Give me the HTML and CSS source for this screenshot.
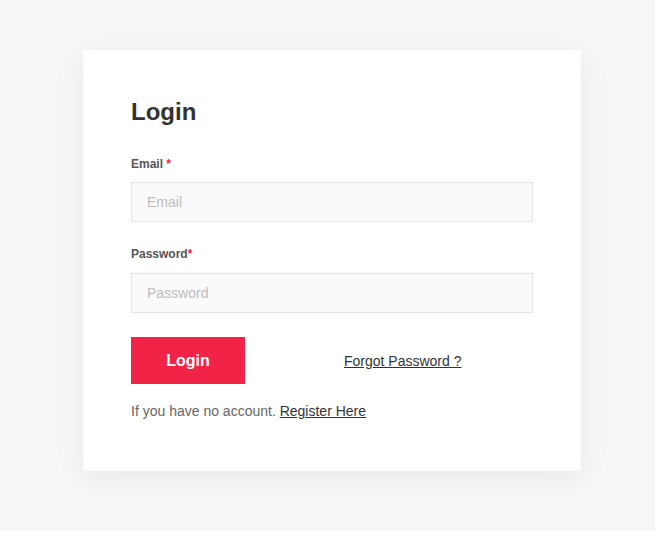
FILE: index.html
```html
<!DOCTYPE html>
<html lang="en">
<head>
<meta charset="utf-8">
<title>Login</title>
<link rel="stylesheet" href="styles.css">
</head>
<body>
<div class="page">
  <div class="card">
    <h1 class="title">Login</h1>
    <form class="form">
      <div class="group">
        <label class="label" for="email">Email <span class="req">*</span></label>
        <input class="input" id="email" type="text" placeholder="Email">
      </div>
      <div class="group group-2">
        <label class="label" for="password">Password<span class="req">*</span></label>
        <input class="input" id="password" type="password" placeholder="Password">
      </div>
      <div class="actions">
        <button class="btn" type="button">Login</button>
        <a class="forgot" href="#">Forgot Password ?</a>
      </div>
      <p class="register">If you have no account. <a class="register-link" href="#">Register Here</a></p>
    </form>
  </div>
</div>
</body>
</html>
```

FILE: styles.css
```css
* {
  box-sizing: border-box;
}

html, body {
  margin: 0;
  padding: 0;
  background: #ffffff;
  font-family: "Liberation Sans", Arial, sans-serif;
}

.page {
  height: 531px;
  background: #f6f7f9;
  padding: 50px 0 0 83px;
}

.card {
  width: 498px;
  background: #ffffff;
  padding: 48px 48px 50px 48px;
  box-shadow: 0 6px 30px rgba(0, 0, 0, 0.07);
}

.title {
  margin: 0;
  font-size: 24px;
  line-height: 28px;
  font-weight: 700;
  color: #333333;
}

.form {
  margin: 31px 0 0 0;
}

.group {
  display: flex;
  flex-direction: column;
}

.group-2 {
  margin-top: 25px;
}

.label {
  font-size: 12px;
  line-height: 14px;
  font-weight: 700;
  color: #555555;
  margin-bottom: 11px;
}

.group-2 .label {
  margin-bottom: 12px;
}

.req {
  color: #f12447;
}

.input {
  width: 100%;
  height: 40px;
  border: 1px solid #e5e5e5;
  background: #fafafa;
  padding: 0 15px;
  font-family: "Liberation Sans", Arial, sans-serif;
  font-size: 14px;
  color: #333333;
  outline: none;
}

.input::placeholder {
  color: #bcbcbc;
}

.actions {
  display: flex;
  align-items: center;
  margin-top: 24px;
}

.btn {
  width: 114px;
  height: 47px;
  border: none;
  background: #f12447;
  color: #ffffff;
  font-family: "Liberation Sans", Arial, sans-serif;
  font-size: 16px;
  font-weight: 700;
  padding: 1px 0 0 0;
  cursor: pointer;
}

.forgot {
  margin-left: 99px;
  font-size: 14px;
  color: #333333;
  text-decoration: underline;
}

.register {
  margin: 17px 0 0 0;
  font-size: 14px;
  line-height: 20px;
  color: #666666;
}

.register-link {
  color: #333333;
  text-decoration: underline;
}
```
